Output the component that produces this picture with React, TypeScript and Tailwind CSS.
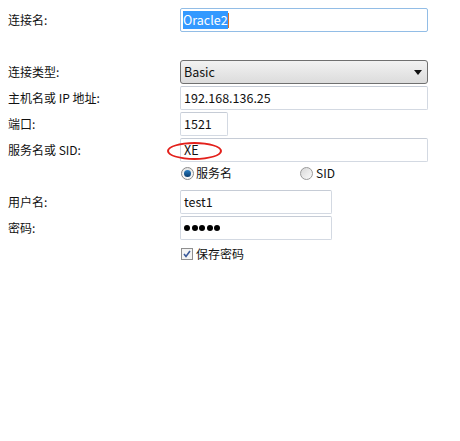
import React from "react";

const font = { fontFamily: '"Noto Sans CJK SC", "Noto Sans", sans-serif' };

function Row({ label, children, className = "" }: { label: string; children: React.ReactNode; className?: string }) {
  return (
    <div className={`flex h-6 items-center ${className}`}>
      <div className="w-[180px] shrink-0 pl-2 text-[12px] leading-none text-[#111]">{label}</div>
      {children}
    </div>
  );
}

function Field({ value, width = "w-[248px]" }: { value: string; width?: string }) {
  return (
    <div className={`flex h-6 ${width} items-center rounded-[2px] border border-[#d3d9e2] border-t-[#c6ccd6] bg-white pl-[3px] text-[12.5px] text-[#111]`}>
      {value}
    </div>
  );
}

export default function App() {
  return (
    <div className="relative h-[441px] w-[460px] bg-white pt-2" style={font}>
      <Row label="连接名:">
        <div className="flex h-6 w-[248px] items-center rounded-[2px] border border-[#92bde6] bg-white pl-[2px] text-[12.5px]">
          <span className="bg-[#3399ff] text-white">Oracle2</span>
          <span className="h-[15px] w-[1px] bg-[#e07020]" />
        </div>
      </Row>

      <Row label="连接类型:" className="mt-7">
        <div className="flex h-6 w-[248px] items-center justify-between rounded-[3px] border border-[#707070] bg-gradient-to-b from-[#f2f2f2] to-[#dcdcdc] pl-[3px] pr-[5px] text-[12.5px] text-[#111]">
          <span>Basic</span>
          <svg width="8" height="5" viewBox="0 0 8 5">
            <path d="M0 0 H8 L4 5 Z" fill="#111" />
          </svg>
        </div>
      </Row>

      <Row label="主机名或 IP 地址:" className="mt-[2px]">
        <Field value="192.168.136.25" />
      </Row>

      <Row label="端口:" className="mt-[2px]">
        <Field value="1521" width="w-[48px]" />
      </Row>

      <Row label="服务名或 SID:" className="mt-[2px]">
        <Field value="XE" />
      </Row>

      <div className="flex h-[22px] items-center pl-[181px] text-[12px] text-[#111]">
        <div className="flex w-[119px] items-center gap-[2px]">
          <span className="flex h-[13px] w-[13px] items-center justify-center rounded-full border border-[#8a8a8a] bg-gradient-to-b from-[#e6e6e6] to-[#fafafa]">
            <span className="h-[7px] w-[7px] rounded-full bg-gradient-to-b from-[#2a7fc4] to-[#0a3d6e]" />
          </span>
          <span>服务名</span>
        </div>
        <div className="flex items-center gap-[3px]">
          <span className="h-[13px] w-[13px] rounded-full border border-[#9a9a9a] bg-gradient-to-br from-[#d8d8d8] to-[#fbfbfb]" />
          <span>SID</span>
        </div>
      </div>

      <Row label="用户名:" className="mt-[6px]">
        <Field value="test1" width="w-[152px]" />
      </Row>

      <Row label="密码:" className="mt-[2px]">
        <div className="flex h-6 w-[152px] items-center gap-[1.6px] rounded-[2px] border border-[#d3d9e2] border-t-[#c6ccd6] bg-white pl-[3px]">
          {[0, 1, 2, 3, 4].map((i) => (
            <span key={i} className="h-[6px] w-[6px] rounded-full bg-black" />
          ))}
        </div>
      </Row>

      <div className="mt-[7px] flex h-[14px] items-center gap-[3px] pl-[181px] text-[12px] text-[#111]">
        <span className="flex h-[12px] w-[12px] items-center justify-center border border-[#8f8f8f] bg-[#f4f4f4]">
          <svg width="8" height="8" viewBox="0 0 8 8">
            <path d="M1 4 L3 6.5 L7 1" stroke="#3a5a9a" strokeWidth="1.6" fill="none" />
          </svg>
        </span>
        <span>保存密码</span>
      </div>

      <div className="absolute left-[167px] top-[142px] h-[18px] w-[55px] rounded-[50%] border-2 border-[#e3201b]" />
    </div>
  );
}
